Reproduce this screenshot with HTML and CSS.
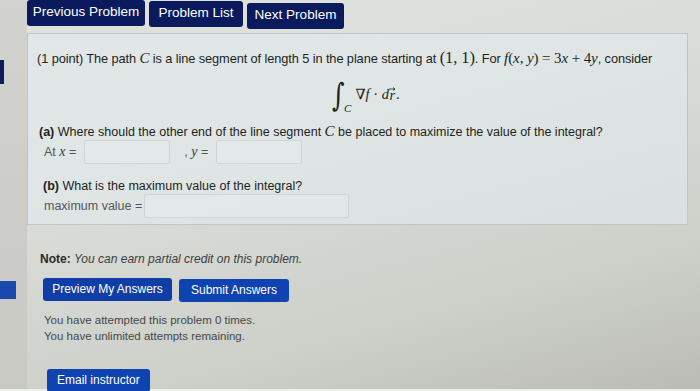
FILE: index.html
```html
<!DOCTYPE html>
<html lang="en">
<head>
	<meta charset="UTF-8">
	<meta name="viewport" content="width=device-width, initial-scale=1.0">
	<title>Problem</title>
	<link rel="stylesheet" href="styles.css">
</head>
<body>
	<div class="screen">
		<aside class="sidebar">
			<span class="tab tab-dark"></span>
			<span class="tab tab-blue"></span>
		</aside>

		<main class="content">
			<nav class="nav">
				<a class="nav-btn btn-prev">Previous Problem</a>
				<a class="nav-btn btn-list">Problem List</a>
				<a class="nav-btn btn-next">Next Problem</a>
			</nav>

			<section class="problem">
				<p class="statement">(1 point) The path <i class="m">C</i> is a line segment of length 5 in the plane starting at <span class="m up">(1, 1)</span>. For <span class="m"><i>f</i>(<i>x</i>, <i>y</i>) = 3<i>x</i> + 4<i>y</i></span>, consider</p>

				<div class="display">
					<span class="integral">∫</span><i class="sub">C</i>
					<span class="m integrand">∇<i>f</i> · <i>d</i><span class="vec"><svg class="arrow" width="7" height="4" viewBox="0 0 7 4"><path d="M0 2h6M4 0.5l2 1.5-2 1.5" fill="none" stroke="#1e1f22" stroke-width="0.8"/></svg><i>r</i></span>.</span>
				</div>

				<p class="part"><b>(a)</b> Where should the other end of the line segment <i class="m">C</i> be placed to maximize the value of the integral?</p>
				<div class="answer-row">
					<span>At <i class="m">x</i> =</span>
					<input class="answer" type="text">
					<span class="sep">, <i class="m">y</i> =</span>
					<input class="answer" type="text">
				</div>

				<p class="part part-b"><b>(b)</b> What is the maximum value of the integral?</p>
				<div class="answer-row">
					<span>maximum value =</span>
					<input class="answer answer-wide" type="text">
				</div>
			</section>

			<p class="note"><b>Note:</b> <i>You can earn partial credit on this problem.</i></p>

			<div class="actions">
				<a class="action-btn btn-preview">Preview My Answers</a>
				<a class="action-btn btn-submit">Submit Answers</a>
			</div>

			<p class="attempts">You have attempted this problem 0 times.<br>You have unlimited attempts remaining.</p>

			<a class="action-btn btn-email">Email instructor</a>
		</main>
	</div>
</body>
</html>
```

FILE: styles.css
```css
html, body {
	height: 100%;
}

body {
	margin: 0;
	overflow: hidden;
	font-family: "Liberation Sans", Arial, sans-serif;
	color: #1e1f22;
	background: linear-gradient(165deg, #e0e2de 0%, #d9dcd7 40%, #cdcfc9 75%, #b9bbb4 100%);
}

.screen {
	display: flex;
	height: 391px;
	border-bottom: 2px solid #eceeea;
	box-sizing: border-box;
}

.sidebar {
	width: 27px;
	flex-shrink: 0;
	display: flex;
	flex-direction: column;
	background: linear-gradient(180deg, #d2d3cf 0%, #c8c9c3 100%);
}

.tab {
	display: block;
}

.tab-dark {
	margin-top: 60px;
	width: 4px;
	height: 24px;
	background-color: #0d1d57;
}

.tab-blue {
	margin-top: 197px;
	width: 16px;
	height: 18px;
	background-color: #1a49ad;
}

.content {
	flex: 1;
}

/* top navigation */
.nav {
	display: flex;
	gap: 4px;
	padding-top: 0;
}

.nav-btn {
	display: block;
	height: 26px;
	line-height: 23px;
	font-size: 13.5px;
	color: #fff;
	background-color: #0b1a5d;
	border-radius: 3px;
	text-align: center;
}

.btn-prev {
	width: 118px;
}

.btn-list {
	width: 94px;
	margin-top: 1px;
}

.btn-next {
	width: 97px;
	margin-top: 3px;
}

/* problem box */
.problem {
	margin-top: 4px;
	width: 661px;
	height: 192px;
	box-sizing: border-box;
	padding: 15px 8px 0 9px;
	border: 1px solid #bfc6c8;
	background-color: rgba(228, 236, 240, .55);
}

.statement {
	margin: 0;
	font-size: 12.8px;
	line-height: 18px;
	letter-spacing: -.1px;
	white-space: nowrap;
}

.m {
	font-family: "Liberation Serif", "DejaVu Serif", serif;
	font-size: 15px;
}

.up {
	font-size: 16.5px;
}

.display {
	height: 38px;
	margin-top: 8px;
	display: flex;
	justify-content: center;
	align-items: center;
	padding-left: 14px;
}

.integral {
	font-family: "DejaVu Serif", serif;
	font-size: 32px;
	font-style: italic;
	line-height: 38px;
	transform: scaleX(.75);
}

.sub {
	font-family: "Liberation Serif", serif;
	font-size: 11px;
	align-self: flex-end;
	margin: 0 4px 0 -3px;
}

.integrand {
	font-size: 14.5px;
	margin-bottom: 2px;
}

.vec {
	display: inline-flex;
	flex-direction: column;
	align-items: center;
	vertical-align: bottom;
	line-height: 15px;
}

.arrow {
	display: block;
	margin-bottom: -3px;
}

.part {
	margin: 9px 0 0 2px;
	font-size: 12.5px;
	line-height: 16px;
}

.part-b {
	margin-top: 14px;
	margin-left: 6px;
}

.answer-row {
	display: flex;
	align-items: center;
	margin: 0 0 0 7px;
	font-size: 12.5px;
	color: #54575a;
}

.answer-row .m {
	font-size: 14px;
	color: #3a3d40;
}

.answer {
	width: 86px;
	height: 24px;
	box-sizing: border-box;
	margin: 0 4px 0 8px;
	border: 1px solid #cfd4d5;
	background-color: rgba(232, 236, 236, .5);
	border-radius: 2px;
}

.sep {
	margin-left: 10px;
}

.answer-wide {
	width: 205px;
	margin-left: 2px;
}

/* below the box */
.note {
	margin: 27px 0 0 13px;
	font-size: 12px;
	color: #2a2b2d;
}

.note i {
	color: #3c3e41;
}

.actions {
	display: flex;
	gap: 7px;
	margin: 12px 0 0 16px;
}

.action-btn {
	display: block;
	height: 23px;
	line-height: 23px;
	padding: 0 12px;
	font-size: 12px;
	color: #fff;
	background-color: #1043b2;
	border-radius: 3px;
	white-space: nowrap;
}

.btn-preview {
	width: 129px;
	box-sizing: border-box;
	padding: 0;
	text-align: center;
	background-color: #0f3fa6;
}

.btn-submit {
	margin-top: 1px;
}

.attempts {
	margin: 10px 0 0 17px;
	font-size: 11.5px;
	line-height: 16px;
	color: #45474a;
}

.btn-email {
	display: inline-block;
	margin: 25px 0 0 20px;
	padding: 0 10px;
	font-size: 12px;
}
```
